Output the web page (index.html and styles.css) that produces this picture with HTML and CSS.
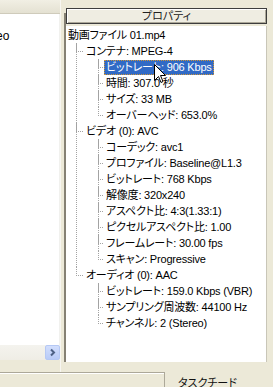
FILE: index.html
```html
<!DOCTYPE html>
<html lang="ja">
<head>
<meta charset="utf-8">
<link rel="stylesheet" href="styles.css">
</head>
<body>
<div class="app">
  <div class="main">
    <div class="left">
      <div class="left-head"></div>
      <div class="left-list">
        <div class="left-row"><span class="clip">Stereo</span></div>
      </div>
      <div class="hscroll">
        <span class="sbtn">
          <svg width="15" height="15" viewBox="0 0 15 15"><path d="M6 4.5 L9 7.5 L6 10.5" fill="none" stroke="#4d6185" stroke-width="2"/></svg>
        </span>
      </div>
    </div>
    <div class="splitter"></div>
    <div class="right">
      <div class="prop-head">プロパティ</div>
      <div class="tree">
        <ul class="root">
          <li><span class="item">動画ファイル 01.mp4</span>
            <ul class="l1">
              <li><span class="item">コンテナ: MPEG-4</span>
                <ul class="l2">
                  <li><span class="item sel">ビットレート: 906 Kbps</span></li>
                  <li><span class="item">時間: 307.0 秒</span></li>
                  <li><span class="item">サイズ: 33 MB</span></li>
                  <li><span class="item">オーバーヘッド: 653.0%</span></li>
                </ul>
              </li>
              <li><span class="item">ビデオ (0): AVC</span>
                <ul class="l2">
                  <li><span class="item">コーデック: avc1</span></li>
                  <li><span class="item">プロファイル: Baseline@L1.3</span></li>
                  <li><span class="item">ビットレート: 768 Kbps</span></li>
                  <li><span class="item">解像度: 320x240</span></li>
                  <li><span class="item">アスペクト比: 4:3(1.33:1)</span></li>
                  <li><span class="item">ピクセルアスペクト比: 1.00</span></li>
                  <li><span class="item">フレームレート: 30.00 fps</span></li>
                  <li><span class="item">スキャン: Progressive</span></li>
                </ul>
              </li>
              <li><span class="item">オーディオ (0): AAC</span>
                <ul class="l2">
                  <li><span class="item">ビットレート: 159.0 Kbps (VBR)</span></li>
                  <li><span class="item">サンプリング周波数: 44100 Hz</span></li>
                  <li><span class="item">チャンネル: 2 (Stereo)</span></li>
                </ul>
              </li>
            </ul>
          </li>
        </ul>
      </div>
    </div>
  </div>
  <div class="tabs">
    <div class="tab-a"></div>
    <div class="tab-b">タスクチード</div>
  </div>
  <svg class="cursor" width="12" height="20" viewBox="0 0 12 20"><path d="M0.5 0.5 L0.5 16.5 L4.5 12.5 L7 18.5 L9 17.5 L6.5 11.5 L11.5 11.5 Z" fill="#fff" stroke="#000" stroke-width="1"/></svg>
</div>
</body>
</html>
```

FILE: styles.css
```css
html, body {
  margin: 0;
  padding: 0;
  background: #ece9d8;
}
.app {
  position: relative;
  width: 273px;
  height: 387px;
  overflow: hidden;
  display: flex;
  flex-direction: column;
  font-family: "Liberation Sans", "Noto Sans CJK JP", sans-serif;
  font-size: 11px;
  font-feature-settings: "palt";
  color: #000;
}
.main {
  display: flex;
  height: 372px;
  flex: none;
}
.left {
  width: 60px;
  border-right: 1px solid #f7f6f1;
  display: flex;
  flex-direction: column;
  padding-bottom: 12px;
}
.left-head {
  height: 13px;
  background: linear-gradient(#f1efe4, #e4e1d2);
  border-bottom: 1px solid #cfcbbb;
  flex: none;
}
.left-list {
  flex: 1;
  background: #fff;
  padding-top: 14px;
  overflow: hidden;
  box-shadow: inset -11px 0 0 -10px #f1f1ee;
}
.left-row {
  height: 16px;
  line-height: 16px;
  white-space: nowrap;
  font-size: 12px;
}
.clip {
  margin-left: -26px;
}
.hscroll {
  height: 15px;
  flex: none;
  background: linear-gradient(#f4f3ee, #efede5);
  display: flex;
  justify-content: flex-end;
}
.sbtn {
  width: 15px;
  height: 15px;
  box-sizing: border-box;
  border: 1px solid #b5c8f4;
  border-radius: 2px;
  background: linear-gradient(#d2defd, #b8cbf7);
  display: flex;
  align-items: center;
  justify-content: center;
}
.sbtn svg {
  display: block;
  margin: -1px;
}
.splitter {
  width: 5px;
  flex: none;
  background:
    linear-gradient(#ece9d8 13px, transparent 13px, transparent 362px, #ece9d8 362px),
    linear-gradient(to right, #ece9d8 3px, #858174 3px);
}
.right {
  width: 201px;
  padding-top: 8px;
  display: flex;
  flex-direction: column;
  gap: 2px;
}
.prop-head {
  height: 16px;
  box-sizing: border-box;
  border: 1px solid #3d3d3d;
  box-shadow: inset 1px 1px 0 #fff, inset -1px -1px 0 #aca899;
  background: #efede2;
  text-align: center;
  line-height: 14px;
  font-size: 11px;
  color: #222;
}
.tree {
  height: 336px;
  box-sizing: border-box;
  background: #fff;
  border-right: 1px solid #c9c6b8;
  padding-top: 1px;
  overflow: hidden;
  letter-spacing: -0.2px;
}
.tree ul {
  list-style: none;
  margin: 0;
  padding: 0;
}
.tree li {
  position: relative;
}
.item {
  display: inline-block;
  height: 16px;
  line-height: 16px;
  padding: 0 2px;
  white-space: nowrap;
  box-sizing: border-box;
  vertical-align: top;
}
.sel {
  background: #316ac5;
  color: #fff;
  outline: 1px dotted #ce953a;
  outline-offset: -1px;
  height: 15px;
  line-height: 15px;
  margin-top: 1px;
}
.l1 {
  margin-left: 18px !important;
}
.l2 {
  margin-left: 20px !important;
}
.l1 > li::before,
.l2 > li::before {
  content: "";
  position: absolute;
  top: 0;
  height: 8px;
  border-left: 1px dotted #a3a3a3;
  border-bottom: 1px dotted #a3a3a3;
}
.l1 > li::before {
  left: -8px;
  width: 6px;
}
.l2 > li::before {
  left: -6px;
  width: 4px;
}
.l1 > li:not(:last-child)::after,
.l2 > li:not(:last-child)::after {
  content: "";
  position: absolute;
  top: 0;
  bottom: 0;
  border-left: 1px dotted #a3a3a3;
}
.l1 > li:not(:last-child)::after {
  left: -8px;
}
.l2 > li:not(:last-child)::after {
  left: -6px;
}
.tabs {
  display: flex;
  height: 15px;
  flex: none;
}
.tab-a {
  width: 165px;
  box-sizing: border-box;
  border-top: 1px solid #aca899;
  border-right: 1px solid #aca899;
  box-shadow: inset 0 1px 0 #fff;
}
.tab-b {
  padding: 3px 0 0 13px;
  line-height: 16px;
  font-size: 11px;
  color: #111;
}
.cursor {
  position: absolute;
  left: 154px;
  top: 64px;
}
```
